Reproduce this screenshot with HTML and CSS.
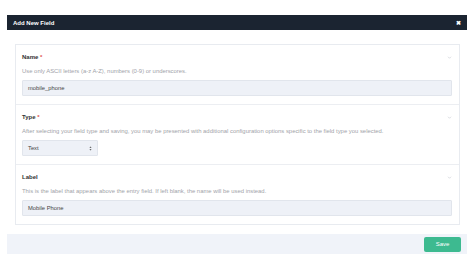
FILE: index.html
```html
<!DOCTYPE html>
<html>
<head>
    <meta name="viewport" content="width=device-width, initial-scale=1.0">
    <title>Add New Field</title>
    <link rel="stylesheet" href="styles.css">
</head>
<body>
    <div class="modal">
        <div class="modal-header">
            <span class="modal-title">Add New Field</span>
            <span class="modal-close">&#x2716;</span>
        </div>

        <div class="modal-body">
            <div class="card">
                <div class="section">
                    <div class="section-head">
                        <span class="label">Name <span class="req">*</span></span>
                        <svg class="chevron" viewBox="0 0 6 4" width="5" height="3"><path d="M1 1l2 2 2-2" fill="none" stroke="#c4c8cf" stroke-width="0.8"/></svg>
                    </div>
                    <div class="help">Use only ASCII letters (a-z A-Z), numbers (0-9) or underscores.</div>
                    <div class="input">mobile_phone</div>
                </div>

                <div class="section">
                    <div class="section-head">
                        <span class="label">Type <span class="req">*</span></span>
                        <svg class="chevron" viewBox="0 0 6 4" width="5" height="3"><path d="M1 1l2 2 2-2" fill="none" stroke="#c4c8cf" stroke-width="0.8"/></svg>
                    </div>
                    <div class="help">After selecting your field type and saving, you may be presented with additional configuration options specific to the field type you selected.</div>
                    <div class="select">
                        <span>Text</span>
                        <svg class="arrows" viewBox="0 0 4 7" width="3" height="5"><path d="M0.5 2.6L2 0.8 3.5 2.6zM0.5 4.4L2 6.2 3.5 4.4z" fill="#444"/></svg>
                    </div>
                </div>

                <div class="section">
                    <div class="section-head">
                        <span class="label">Label</span>
                        <svg class="chevron" viewBox="0 0 6 4" width="5" height="3"><path d="M1 1l2 2 2-2" fill="none" stroke="#c4c8cf" stroke-width="0.8"/></svg>
                    </div>
                    <div class="help">This is the label that appears above the entry field. If left blank, the name will be used instead.</div>
                    <div class="input">Mobile Phone</div>
                </div>
            </div>
            <div class="more"></div>
        </div>

        <div class="modal-footer">
            <button class="save">Save</button>
        </div>
    </div>
</body>
</html>
```

FILE: styles.css
```css
body {
    margin: 0;
    background: #ffffff;
    font-family: "Liberation Sans", Arial, sans-serif;
    color: #333;
}
.modal {
    width: 460px;
    margin: 15px 0 0 7px;
    display: flex;
    flex-direction: column;
    background: #fff;
}
.modal-header {
    height: 15px;
    background: #1b2431;
    display: flex;
    align-items: center;
    justify-content: space-between;
    padding: 0 6px;
}
.modal-title {
    color: #fff;
    font-weight: bold;
    font-size: 6px;
}
.modal-close {
    color: #fff;
    font-size: 6px;
    font-weight: bold;
}
.modal-body {
    height: 204px;
    overflow-y: scroll;
    padding: 14px 7px 14px 8px;
    box-sizing: border-box;
}
.modal-body::-webkit-scrollbar {
    width: 6px;
}
.modal-body::-webkit-scrollbar-track {
    background: #f1f1f1;
}
.modal-body::-webkit-scrollbar-thumb {
    background: #c1c1c1;
    border-left: 1px solid #f1f1f1;
    border-right: 1px solid #f1f1f1;
}
.card {
    border: 1px solid #e8ebf0;
}
.more {
    height: 215px;
}
.section {
    padding: 8px 7px 8px 6px;
    border-bottom: 1px solid #eceef2;
}
.section:last-child {
    border-bottom: none;
}
.section-head {
    display: flex;
    align-items: center;
    justify-content: space-between;
    height: 8px;
    margin-bottom: 6px;
}
.label {
    font-size: 6px;
    font-weight: bold;
    color: #333;
}
.req {
    color: #e0524f;
}
.help {
    font-size: 5.9px;
    line-height: 8px;
    color: #9fa3a9;
    margin-bottom: 5px;
    white-space: nowrap;
}
.input {
    height: 16px;
    box-sizing: border-box;
    background: #eef1f7;
    border: 1px solid #e1e5ec;
    border-radius: 1px;
    font-size: 5.8px;
    color: #444;
    padding: 0 5px;
    display: flex;
    align-items: center;
}
.select {
    width: 76px;
    height: 16px;
    box-sizing: border-box;
    background: #eef1f7;
    border: 1px solid #e1e5ec;
    border-radius: 1px;
    font-size: 5.8px;
    color: #444;
    padding: 0 5px;
    display: flex;
    align-items: center;
    justify-content: space-between;
}
.modal-footer {
    height: 20px;
    background: #f0f3f9;
    display: flex;
    align-items: center;
    justify-content: flex-end;
    padding: 0 6px;
}
.save {
    width: 37px;
    height: 15px;
    background: #3dba90;
    color: #fff;
    border: none;
    border-radius: 2px;
    font-family: "Liberation Sans", Arial, sans-serif;
    font-size: 6px;
    padding: 0;
}
```
